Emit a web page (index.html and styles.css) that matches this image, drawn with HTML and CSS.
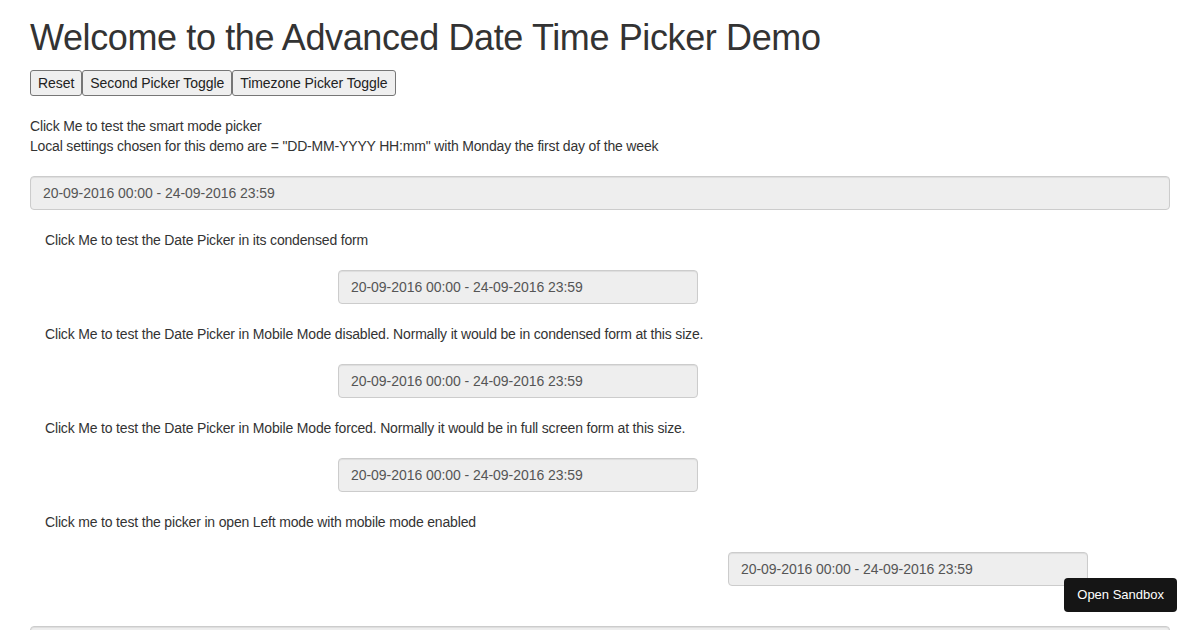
FILE: index.html
```html
<!DOCTYPE html>
<html lang="en">
<head>
    <meta charset="UTF-8">
    <meta name="viewport" content="width=device-width, initial-scale=1.0">
    <title>Advanced Date Time Picker Demo</title>
    <link rel="stylesheet" href="styles.css">
</head>
<body>

    <div class="container">
        <h1>Welcome to the Advanced Date Time Picker Demo</h1>

        <div class="toolbar"><button class="btn">Reset</button><button class="btn">Second Picker Toggle</button><button class="btn">Timezone Picker Toggle</button></div>

        <p class="intro">
            Click Me to test the smart mode picker<br>
            Local settings chosen for this demo are = "DD-MM-YYYY HH:mm" with Monday the first day of the week
        </p>

        <input type="text" class="form-control" value="20-09-2016 00:00 - 24-09-2016 23:59" readonly>

        <div class="demo">
            <p>Click Me to test the Date Picker in its condensed form</p>
            <input type="text" class="form-control picker-mid" value="20-09-2016 00:00 - 24-09-2016 23:59" readonly>
        </div>

        <div class="demo">
            <p>Click Me to test the Date Picker in Mobile Mode disabled. Normally it would be in condensed form at this size.</p>
            <input type="text" class="form-control picker-mid" value="20-09-2016 00:00 - 24-09-2016 23:59" readonly>
        </div>

        <div class="demo">
            <p>Click Me to test the Date Picker in Mobile Mode forced. Normally it would be in full screen form at this size.</p>
            <input type="text" class="form-control picker-mid" value="20-09-2016 00:00 - 24-09-2016 23:59" readonly>
        </div>

        <div class="demo">
            <p>Click me to test the picker in open Left mode with mobile mode enabled</p>
            <input type="text" class="form-control picker-right" value="20-09-2016 00:00 - 24-09-2016 23:59" readonly>
        </div>

        <input type="text" class="form-control bottom-picker" value="" readonly>
    </div>

    <a class="sandbox-btn" href="#">Open Sandbox</a>

</body>
</html>
```

FILE: styles.css
```css
body {
    font-family: "Liberation Sans", Arial, sans-serif;
    font-size: 14px;
    line-height: 20px;
    letter-spacing: -0.17px;
    color: #333;
    background: #fff;
    margin: 0;
    padding: 0;
}
.container {
    padding: 0 30px;
}
h1 {
    font-size: 36px;
    font-weight: 500;
    line-height: 40px;
    letter-spacing: -0.38px;
    margin: 18px 0 12px;
}
.toolbar {
    display: flex;
}
.btn {
    font-family: inherit;
    font-size: 14px;
    line-height: 20px;
    letter-spacing: -0.06px;
    color: #222;
    background-color: #efefef;
    border: 1px solid #767676;
    border-radius: 3px;
    padding: 2px 7px;
    margin: 0;
    cursor: pointer;
}
.intro {
    margin: 20px 0;
}
.form-control {
    display: block;
    box-sizing: border-box;
    width: 100%;
    height: 34px;
    padding: 6px 12px;
    font-family: inherit;
    font-size: 14px;
    line-height: 20px;
    letter-spacing: -0.05px;
    color: #555;
    background-color: #eee;
    border: 1px solid #ccc;
    border-radius: 4px;
    box-shadow: inset 0 1px 1px rgba(0,0,0,.075);
    margin: 0;
}
.demo {
    padding-left: 15px;
    margin-top: 20px;
}
.demo p {
    margin: 0 0 20px;
}
.picker-mid {
    width: 360px;
    margin-left: 293px;
}
.picker-right {
    width: 360px;
    margin-left: 683px;
}
.bottom-picker {
    margin-top: 40px;
}
.sandbox-btn {
    position: fixed;
    right: 23px;
    bottom: 18px;
    height: 34px;
    line-height: 34px;
    padding: 0 13px;
    background-color: #151515;
    color: #fff;
    font-size: 13px;
    letter-spacing: 0;
    text-decoration: none;
    border-radius: 4px;
}
```
